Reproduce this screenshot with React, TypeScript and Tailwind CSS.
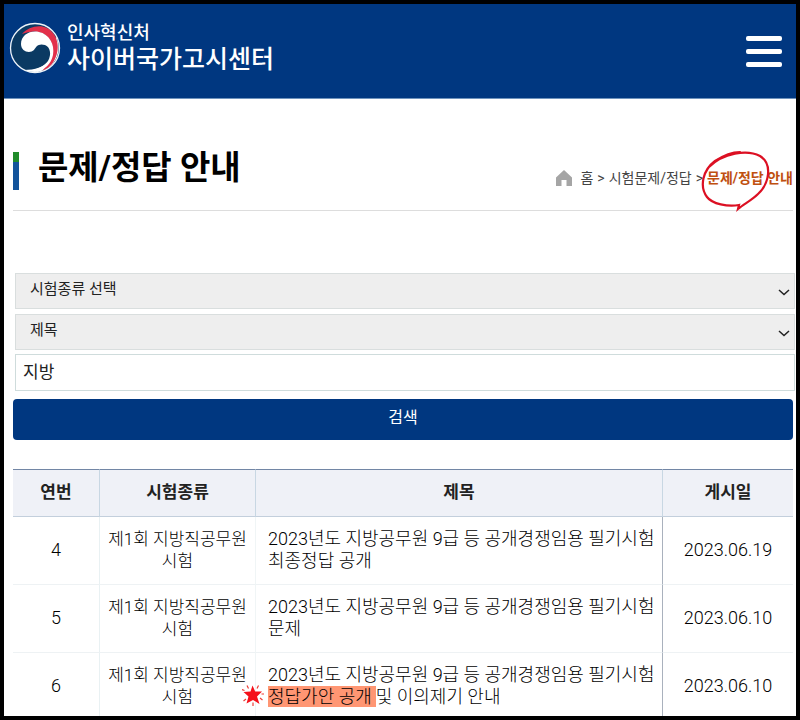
import React from "react";

type Notice = {
  no: number;
  kind: string;
  marked?: string;
  title: string;
  rest: string;
  date: string;
};

const notices: Notice[] = [
  { no: 4, kind: "제1회 지방직공무원 시험", title: "2023년도 지방공무원 9급 등 공개경쟁임용 필기시험", rest: "최종정답 공개", date: "2023.06.19" },
  { no: 5, kind: "제1회 지방직공무원 시험", title: "2023년도 지방공무원 9급 등 공개경쟁임용 필기시험", rest: "문제", date: "2023.06.10" },
  { no: 6, kind: "제1회 지방직공무원 시험", title: "2023년도 지방공무원 9급 등 공개경쟁임용 필기시험", marked: "정답가안 공개", rest: "및 이의제기 안내", date: "2023.06.10" },
];

function Emblem() {
  return (
    <svg viewBox="0 0 52 52" className="h-[52px] w-[52px] shrink-0" aria-hidden="true">
      <circle cx="26" cy="26" r="24" fill="#0b3a63" />
      <path d="M47 14C54 31 46 46 29 50L20 49C34 47 44 38 46 26Z" fill="#fff" />
      <path d="M13 12C19 5 30 2 38 6C48 11 52 25 46 37C43 43 39 47 33 49C42 40 46 30 42 20C37 9 25 7 13 12Z" fill="#e2304a" />
      <path d="M12 22C12 13 21 8 30 10C40 12 46 22 44 33C42 42 36 48 26 50C22 50 18 49 15 48C26 48 35 45 39 39C43 32 41 25 36 23C29 21 27 25 25 28C21 32 12 30 12 22Z" fill="#fff" />
      <circle cx="26" cy="26" r="24.5" fill="none" stroke="#eef4f8" strokeWidth="1.3" />
    </svg>
  );
}

function Select({ label, id }: { label: string; id: string }) {
  return (
    <div className="relative">
      <select
        id={id}
        aria-label={label}
        className="block h-9 w-full appearance-none border border-[#d9dede] bg-[#eeeeee] pb-1 pl-3.5 pr-10 text-[15px] text-[#222]"
      >
        <option>{label}</option>
      </select>
      <svg viewBox="0 0 12 7" className="pointer-events-none absolute right-[5px] top-4 h-[7px] w-3" fill="none" stroke="#222" strokeWidth="1.5" aria-hidden="true">
        <path d="M1 1L6 5.500L11 1" />
      </svg>
    </div>
  );
}

function Star() {
  return (
    <svg viewBox="0 0 22 22" className="absolute -left-[26px] -top-0.5 h-[22px] w-[22px]" aria-hidden="true">
      <path d="M10.500 1.500L13.200 7.500L20 7.500L15 12.500L17.500 20L11 16L4.500 19.500L6.500 12.500L1.500 8L8.500 7.500Z" fill="#f5101a" />
      <path d="M5 1.500L6.500 4.500M16.500 1.500L15 4.500M22 10H19.500M20.500 16L18 14M11 22V18.500M1.500 17L4 15M0 5.500L2.500 6.500" stroke="#ef3b35" strokeWidth="1.200" />
    </svg>
  );
}

export default function App() {
  return (
    <div className="min-h-screen border-4 border-black bg-white font-[Roboto,'Noto_Sans_CJK_KR',sans-serif] text-[#222]">
      <header className="flex h-[95px] items-center justify-between border-b border-[#6f93bd] bg-[#003780] pb-1.5 pl-[5px] pr-3.5 text-white">
        <a href="#" className="flex items-center gap-1.5">
          <Emblem />
          <span className="flex flex-col font-medium">
            <span className="text-lg leading-6">인사혁신처</span>
            <span className="text-[25px] leading-[30px]">사이버국가고시센터</span>
          </span>
        </a>
        <button type="button" aria-label="메뉴" className="flex w-9 flex-col gap-2 pt-1.5">
          <span className="h-[5px] w-full rounded-xs bg-white" />
          <span className="h-[5px] w-full rounded-xs bg-white" />
          <span className="h-[5px] w-full rounded-xs bg-white" />
        </button>
      </header>

      <main className="pl-[9px] pr-[3px]">
        <div className="flex h-28 items-end justify-between border-b border-[#ddd] pb-5">
          <div className="flex items-center gap-[19px]">
            <span className="flex h-[38px] w-1.5 flex-col bg-[#13549b]">
              <span className="h-2.5 bg-[#218c2b]" />
            </span>
            <h1 className="text-[33px] font-bold leading-[38px] text-black">
              <span className="block pb-1.5 leading-8">문제/정답 안내</span>
            </h1>
          </div>
          <nav aria-label="현재 위치" className="flex items-center gap-1 text-sm leading-6 text-[#444]">
            <svg viewBox="0 0 16 16" className="mr-1 h-4 w-4" fill="#a5a5a5" aria-hidden="true">
              <path d="M8 0L16 7.500V16H10.500V10H5.500V16H0V7.500Z" />
            </svg>
            <a href="#">홈</a>
            <span>&gt;</span>
            <a href="#">시험문제/정답</a>
            <span>&gt;</span>
            <span className="relative font-bold text-[#c0500f]">
              문제/정답 안내
              <svg viewBox="0 0 70 62" className="pointer-events-none absolute -left-1.5 -top-4 h-[62px] w-[70px]" fill="none" stroke="#dc1023" strokeWidth="2.200" strokeLinecap="round" aria-hidden="true">
                <path d="M8 17C22 3 46 -1 59 6C72 14 68 34 57 44C51 50 43 54 37 59L38 55C27 57 11 54 6 47C-2 36 2 20 14 11C20 7 30 2 39 2" />
              </svg>
            </span>
          </nav>
        </div>

        <form className="pt-[62px]" onSubmit={(e) => e.preventDefault()}>
          <div className="-mr-0.5 flex flex-col gap-[5px] pl-0.5">
            <Select id="kind" label="시험종류 선택" />
            <Select id="field" label="제목" />
            <input
              aria-label="검색어"
              defaultValue="지방"
              className="-mt-px block h-[37px] w-full border border-[#cfdcdc] bg-white pb-1 pl-[7px] text-[17px]"
            />
          </div>
          <button type="submit" className="mt-2 block h-[41px] w-full rounded bg-[#003780] pb-1 text-base text-white">
            검색
          </button>
        </form>

        <table className="mt-[29px] w-full table-fixed border-separate border-spacing-0 text-center text-lg leading-[22px]">
          <colgroup>
            <col className="w-[87px]" />
            <col className="w-[156px]" />
            <col />
            <col className="w-[130px]" />
          </colgroup>
          <thead>
            <tr className="bg-[#eff1f7] text-[17px]">
              {["연번", "시험종류", "제목", "게시일"].map((h) => (
                <th key={h} scope="col" className="h-12 border-b border-r border-t border-b-[#c3cfdc] border-r-[#c8d7e3] border-t-[#7286a5] pb-0.5 font-bold last:border-r-0">
                  {h}
                </th>
              ))}
            </tr>
          </thead>
          <tbody className="text-black [&>tr:last-child>td]:border-b-0 [&>tr:last-child>td]:pb-2 [&>tr>td]:border-b [&>tr>td]:border-b-[#eef2f4] [&>tr>td]:pb-3 [&>tr>td]:pt-[11px]">
            {notices.map((n) => (
              <tr key={n.no}>
                <td className="border-r border-r-[#e9f1f3] font-light">{n.no}</td>
                <td className="border-r border-r-[#f0f5f6] px-1 text-[17px] font-light [word-break:keep-all]">{n.kind}</td>
                <td className="border-r border-r-[#a9b1bd] pl-3 text-left font-light">
                  {n.title}
                  <br />
                  {n.marked && (
                    <span className="relative">
                      <Star />
                      <mark className="bg-[#ff9673] pr-1 text-inherit">{n.marked}</mark>
                    </span>
                  )}
                  {n.rest}
                </td>
                <td className="font-light">{n.date}</td>
              </tr>
            ))}
          </tbody>
        </table>
      </main>
    </div>
  );
}
